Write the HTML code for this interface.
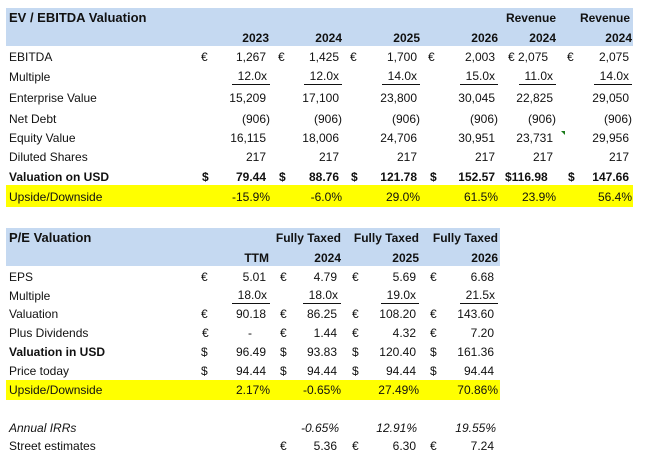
<!DOCTYPE html>
<html><head><meta charset="utf-8"><style>
body{margin:0;width:652px;height:453px;background:#fff;position:relative;overflow:hidden;font-family:"Liberation Sans",sans-serif;font-size:12px;color:#111}
.t{position:absolute;white-space:nowrap;line-height:14px}
.b{font-weight:bold}
.u{border-bottom:1px solid #111;padding:0 3px 1px 6px;line-height:13px}
.bg{position:absolute}
</style></head><body>
<div class="bg" style="left:6px;top:8px;width:627px;height:38px;background:#c5d9f1"></div>
<div class="bg" style="left:6px;top:185px;width:627px;height:22px;background:#ffff00"></div>
<div class="bg" style="left:6px;top:228px;width:494px;height:38px;background:#c5d9f1"></div>
<div class="bg" style="left:6px;top:380px;width:494px;height:20px;background:#ffff00"></div>
<div class="bg" style="left:561px;top:131px;width:0;height:0;border-top:4px solid #1a7a1a;border-left:4px solid transparent"></div>

<div class="t b" style="left:9px;top:11px;font-size:13px">EV / EBITDA Valuation</div>
<div class="t b" style="right:22px;top:11px">Revenue</div>
<div class="t b" style="right:96px;top:11px">Revenue</div>
<div class="t b" style="right:383px;top:31px">2023</div>
<div class="t b" style="right:310px;top:31px">2024</div>
<div class="t b" style="right:232px;top:31px">2025</div>
<div class="t b" style="right:154px;top:31px">2026</div>
<div class="t b" style="right:96px;top:31px">2024</div>
<div class="t b" style="right:20px;top:31px">2024</div>

<div class="t" style="left:9px;top:50px">EBITDA</div>
<div class="t" style="left:9px;top:70px">Multiple</div>
<div class="t" style="left:9px;top:91px">Enterprise Value</div>
<div class="t" style="left:9px;top:112px">Net Debt</div>
<div class="t" style="left:9px;top:131px">Equity Value</div>
<div class="t" style="left:9px;top:150px">Diluted Shares</div>
<div class="t b" style="left:9px;top:170px">Valuation on USD</div>
<div class="t" style="left:9px;top:190px">Upside/Downside</div>

<div class="t" style="left:201px;top:50px">€</div><div class="t" style="right:386px;top:50px">1,267</div>
<div class="t" style="left:278px;top:50px">€</div><div class="t" style="right:313px;top:50px">1,425</div>
<div class="t" style="left:350px;top:50px">€</div><div class="t" style="right:235px;top:50px">1,700</div>
<div class="t" style="left:428px;top:50px">€</div><div class="t" style="right:157px;top:50px">2,003</div>
<div class="t" style="left:508px;top:50px">€ 2,075</div>
<div class="t" style="left:567px;top:50px">€</div><div class="t" style="right:23px;top:50px">2,075</div>

<div class="t u" style="right:382px;top:70px">12.0x</div>
<div class="t u" style="right:310px;top:70px">12.0x</div>
<div class="t u" style="right:232px;top:70px">14.0x</div>
<div class="t u" style="right:154px;top:70px">15.0x</div>
<div class="t u" style="right:96px;top:70px">11.0x</div>
<div class="t u" style="right:20px;top:70px">14.0x</div>

<div class="t" style="right:386px;top:91px">15,209</div>
<div class="t" style="right:313px;top:91px">17,100</div>
<div class="t" style="right:235px;top:91px">23,800</div>
<div class="t" style="right:157px;top:91px">30,045</div>
<div class="t" style="right:99px;top:91px">22,825</div>
<div class="t" style="right:23px;top:91px">29,050</div>

<div class="t" style="right:382px;top:112px">(906)</div>
<div class="t" style="right:310px;top:112px">(906)</div>
<div class="t" style="right:232px;top:112px">(906)</div>
<div class="t" style="right:154px;top:112px">(906)</div>
<div class="t" style="right:96px;top:112px">(906)</div>
<div class="t" style="right:20px;top:112px">(906)</div>

<div class="t" style="right:386px;top:131px">16,115</div>
<div class="t" style="right:313px;top:131px">18,006</div>
<div class="t" style="right:235px;top:131px">24,706</div>
<div class="t" style="right:157px;top:131px">30,951</div>
<div class="t" style="right:99px;top:131px">23,731</div>
<div class="t" style="right:23px;top:131px">29,956</div>

<div class="t" style="right:386px;top:150px">217</div>
<div class="t" style="right:313px;top:150px">217</div>
<div class="t" style="right:235px;top:150px">217</div>
<div class="t" style="right:157px;top:150px">217</div>
<div class="t" style="right:99px;top:150px">217</div>
<div class="t" style="right:23px;top:150px">217</div>

<div class="t b" style="left:202px;top:170px">$</div><div class="t b" style="right:386px;top:170px">79.44</div>
<div class="t b" style="left:279px;top:170px">$</div><div class="t b" style="right:313px;top:170px">88.76</div>
<div class="t b" style="left:351px;top:170px">$</div><div class="t b" style="right:235px;top:170px">121.78</div>
<div class="t b" style="left:430px;top:170px">$</div><div class="t b" style="right:157px;top:170px">152.57</div>
<div class="t b" style="left:505px;top:170px">$116.98</div>
<div class="t b" style="left:568px;top:170px">$</div><div class="t b" style="right:23px;top:170px">147.66</div>

<div class="t" style="right:382px;top:190px">-15.9%</div>
<div class="t" style="right:310px;top:190px">-6.0%</div>
<div class="t" style="right:232px;top:190px">29.0%</div>
<div class="t" style="right:154px;top:190px">61.5%</div>
<div class="t" style="right:96px;top:190px">23.9%</div>
<div class="t" style="right:20px;top:190px">56.4%</div>

<!-- P/E -->
<div class="t b" style="left:9px;top:231px;font-size:13px">P/E Valuation</div>
<div class="t b" style="right:311px;top:231px">Fully Taxed</div>
<div class="t b" style="right:233px;top:231px">Fully Taxed</div>
<div class="t b" style="right:154px;top:231px">Fully Taxed</div>
<div class="t b" style="right:383px;top:251px">TTM</div>
<div class="t b" style="right:311px;top:251px">2024</div>
<div class="t b" style="right:233px;top:251px">2025</div>
<div class="t b" style="right:154px;top:251px">2026</div>

<div class="t" style="left:9px;top:270px">EPS</div>
<div class="t" style="left:9px;top:289px">Multiple</div>
<div class="t" style="left:9px;top:307px">Valuation</div>
<div class="t" style="left:9px;top:326px">Plus Dividends</div>
<div class="t b" style="left:9px;top:345px">Valuation in USD</div>
<div class="t" style="left:9px;top:364px">Price today</div>
<div class="t" style="left:9px;top:383px">Upside/Downside</div>
<div class="t" style="left:9px;top:421px;font-style:italic">Annual IRRs</div>
<div class="t" style="left:9px;top:439px">Street estimates</div>

<div class="t" style="left:201px;top:270px">€</div><div class="t" style="right:386px;top:270px">5.01</div>
<div class="t" style="left:280px;top:270px">€</div><div class="t" style="right:315px;top:270px">4.79</div>
<div class="t" style="left:352px;top:270px">€</div><div class="t" style="right:236px;top:270px">5.69</div>
<div class="t" style="left:430px;top:270px">€</div><div class="t" style="right:158px;top:270px">6.68</div>

<div class="t u" style="right:382px;top:289px">18.0x</div>
<div class="t u" style="right:311px;top:289px">18.0x</div>
<div class="t u" style="right:233px;top:289px">19.0x</div>
<div class="t u" style="right:154px;top:289px">21.5x</div>

<div class="t" style="left:201px;top:307px">€</div><div class="t" style="right:386px;top:307px">90.18</div>
<div class="t" style="left:280px;top:307px">€</div><div class="t" style="right:315px;top:307px">86.25</div>
<div class="t" style="left:352px;top:307px">€</div><div class="t" style="right:236px;top:307px">108.20</div>
<div class="t" style="left:430px;top:307px">€</div><div class="t" style="right:158px;top:307px">143.60</div>

<div class="t" style="left:202px;top:326px">€</div><div class="t" style="left:248px;top:326px">-</div>
<div class="t" style="left:280px;top:326px">€</div><div class="t" style="right:315px;top:326px">1.44</div>
<div class="t" style="left:352px;top:326px">€</div><div class="t" style="right:236px;top:326px">4.32</div>
<div class="t" style="left:430px;top:326px">€</div><div class="t" style="right:158px;top:326px">7.20</div>

<div class="t" style="left:201px;top:345px">$</div><div class="t" style="right:386px;top:345px">96.49</div>
<div class="t" style="left:280px;top:345px">$</div><div class="t" style="right:315px;top:345px">93.83</div>
<div class="t" style="left:352px;top:345px">$</div><div class="t" style="right:236px;top:345px">120.40</div>
<div class="t" style="left:430px;top:345px">$</div><div class="t" style="right:158px;top:345px">161.36</div>

<div class="t" style="left:201px;top:364px">$</div><div class="t" style="right:386px;top:364px">94.44</div>
<div class="t" style="left:280px;top:364px">$</div><div class="t" style="right:315px;top:364px">94.44</div>
<div class="t" style="left:352px;top:364px">$</div><div class="t" style="right:236px;top:364px">94.44</div>
<div class="t" style="left:430px;top:364px">$</div><div class="t" style="right:158px;top:364px">94.44</div>

<div class="t" style="right:382px;top:383px">2.17%</div>
<div class="t" style="right:311px;top:383px">-0.65%</div>
<div class="t" style="right:233px;top:383px">27.49%</div>
<div class="t" style="right:154px;top:383px">70.86%</div>

<div class="t" style="right:313px;top:421px;font-style:italic">-0.65%</div>
<div class="t" style="right:235px;top:421px;font-style:italic">12.91%</div>
<div class="t" style="right:156px;top:421px;font-style:italic">19.55%</div>

<div class="t" style="left:280px;top:439px">€</div><div class="t" style="right:315px;top:439px">5.36</div>
<div class="t" style="left:352px;top:439px">€</div><div class="t" style="right:236px;top:439px">6.30</div>
<div class="t" style="left:430px;top:439px">€</div><div class="t" style="right:158px;top:439px">7.24</div>
</body></html>
